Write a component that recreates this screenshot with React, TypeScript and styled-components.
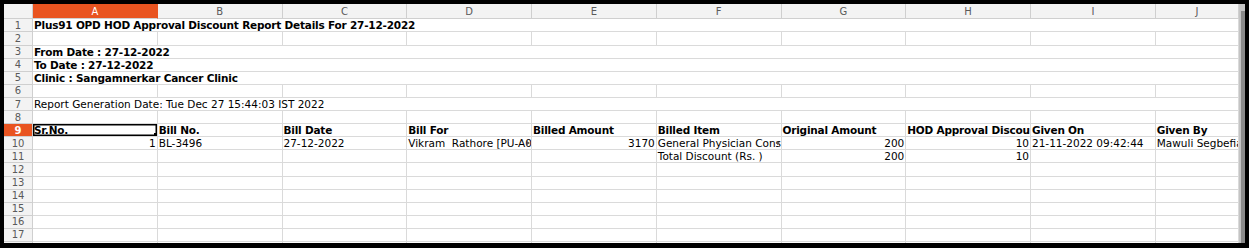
import React from 'react';
import styled, { createGlobalStyle, css } from 'styled-components';

type CellData = {
  text?: string;
  bold?: boolean;
  right?: boolean;
  clipped?: boolean;
};

type RowData = {
  merged?: CellData;
  cells?: CellData[];
};

const columns = ['A', 'B', 'C', 'D', 'E', 'F', 'G', 'H', 'I', 'J'];

const empty: CellData[] = columns.map(() => ({}));

const rows: RowData[] = [
  { merged: { text: 'Plus91 OPD HOD Approval Discount Report Details For 27-12-2022', bold: true } },
  { cells: empty },
  { merged: { text: 'From Date : 27-12-2022', bold: true } },
  { merged: { text: 'To Date : 27-12-2022', bold: true } },
  { merged: { text: 'Clinic : Sangamnerkar Cancer Clinic', bold: true } },
  { cells: empty },
  { merged: { text: 'Report Generation Date: Tue Dec 27 15:44:03 IST 2022' } },
  { cells: empty },
  {
    cells: [
      { text: 'Sr.No.', bold: true },
      { text: 'Bill No.', bold: true },
      { text: 'Bill Date', bold: true },
      { text: 'Bill For', bold: true },
      { text: 'Billed Amount', bold: true },
      { text: 'Billed Item', bold: true },
      { text: 'Original Amount', bold: true },
      { text: 'HOD Approval Discount', bold: true },
      { text: 'Given On', bold: true },
      { text: 'Given By', bold: true },
    ],
  },
  {
    cells: [
      { text: '1', right: true },
      { text: 'BL-3496' },
      { text: '27-12-2022' },
      { text: 'Vikram\u00a0\u00a0Rathore [PU-A0412]', clipped: true },
      { text: '3170', right: true },
      { text: 'General Physician Consultation', clipped: true },
      { text: '200', right: true },
      { text: '10', right: true },
      { text: '21-11-2022 09:42:44' },
      { text: 'Mawuli Segbefia' },
    ],
  },
  {
    cells: [
      {},
      {},
      {},
      {},
      {},
      { text: 'Total Discount (Rs. )' },
      { text: '200', right: true },
      { text: '10', right: true },
      {},
      {},
    ],
  },
  { cells: empty },
  { cells: empty },
  { cells: empty },
  { cells: empty },
  { cells: empty },
  { cells: empty },
  { cells: empty },
];

const ACTIVE_ROW = 9;

const App = function App() {
  return (
    <Frame>
      <GlobalStyle />
      <Sheet>
        <Corner />
        {columns.map((c, i) => (
          <ColHead key={c} $active={i === 0}>
            {c}
          </ColHead>
        ))}
        {rows.map((row, r) => {
          const n = r + 1;
          return (
            <React.Fragment key={n}>
              <RowHead $active={n === ACTIVE_ROW}>{n}</RowHead>
              {row.merged ? (
                <Cell $merged $bold={row.merged.bold}>
                  {row.merged.text}
                </Cell>
              ) : (
                row.cells!.map((cell, c) => (
                  <Cell
                    key={c}
                    $bold={cell.bold}
                    $right={cell.right}
                    $clipped={cell.clipped}
                    $selected={n === ACTIVE_ROW && c === 0}
                  >
                    {cell.text}
                  </Cell>
                ))
              )}
            </React.Fragment>
          );
        })}
      </Sheet>
      <Scrollbar>
        <Thumb />
      </Scrollbar>
    </Frame>
  );
};

const GlobalStyle = createGlobalStyle`
  html, body {
    margin: 0;
    padding: 0;
    background: #000;
  }
`;

const Frame = styled.div`
  box-sizing: border-box;
  width: 1249px;
  height: 248px;
  padding: 4px 4px 5px 4px;
  background: #000;
  display: flex;
`;

const Sheet = styled.div`
  flex: 1;
  background: #fff;
  overflow: hidden;
  display: grid;
  grid-template-columns: 29px repeat(9, 124.75px) 1fr;
  grid-template-rows: 15.4px;
  grid-auto-rows: 13.1px;
  font-family: 'DejaVu Sans', 'Liberation Sans', sans-serif;
  font-size: 10.5px;
  color: #000;
`;

const headBase = css`
  box-sizing: border-box;
  background: #f3f3f3;
  color: #5a5a5a;
  font-size: 10px;
  display: flex;
  align-items: center;
  justify-content: center;
  border-right: 1px solid #cfcfcf;
  border-bottom: 1px solid #cfcfcf;
`;

const Corner = styled.div`
  ${headBase}
`;

const ColHead = styled.div<{ $active?: boolean }>`
  ${headBase}
  ${(p) =>
    p.$active &&
    css`
      background: #e95420;
      color: #fff;
      border-right-color: #e95420;
    `}
`;

const RowHead = styled.div<{ $active?: boolean }>`
  ${headBase}
  ${(p) =>
    p.$active &&
    css`
      background: #e95420;
      color: #fff;
      font-weight: bold;
    `}
`;

const Cell = styled.div<{
  $merged?: boolean;
  $bold?: boolean;
  $right?: boolean;
  $clipped?: boolean;
  $selected?: boolean;
}>`
  position: relative;
  box-sizing: border-box;
  border-right: 1px solid #dadada;
  border-bottom: 1px solid #dadada;
  padding: 0 1px;
  overflow: hidden;
  white-space: nowrap;
  line-height: 12px;
  font-weight: ${(p) => (p.$bold ? 'bold' : 'normal')};
  letter-spacing: ${(p) => (p.$bold ? '-0.2px' : '0')};
  text-align: ${(p) => (p.$right ? 'right' : 'left')};
  ${(p) => p.$merged && css`grid-column: 2 / -1;`}
  ${(p) =>
    p.$clipped &&
    css`
      padding-right: 4px;
      &::after {
        content: '';
        position: absolute;
        right: 1px;
        top: 4px;
        border-left: 3px solid #555;
        border-top: 2.5px solid transparent;
        border-bottom: 2.5px solid transparent;
      }
    `}
  ${(p) =>
    p.$selected &&
    css`
      z-index: 1;
      box-shadow: inset 0 0 0 1.5px #000;
      &::after {
        content: '';
        position: absolute;
        right: 0;
        bottom: 0;
        width: 3px;
        height: 3px;
        background: #000;
      }
    `}
`;

const Scrollbar = styled.div`
  width: 6px;
  background: #c4c4c4;
  display: flex;
  padding-top: 3px;
  box-sizing: border-box;
  justify-content: flex-end;
`;

const Thumb = styled.div`
  width: 4px;
  margin-top: 4px;
  background: #8a8a8a;
`;

export default App;
